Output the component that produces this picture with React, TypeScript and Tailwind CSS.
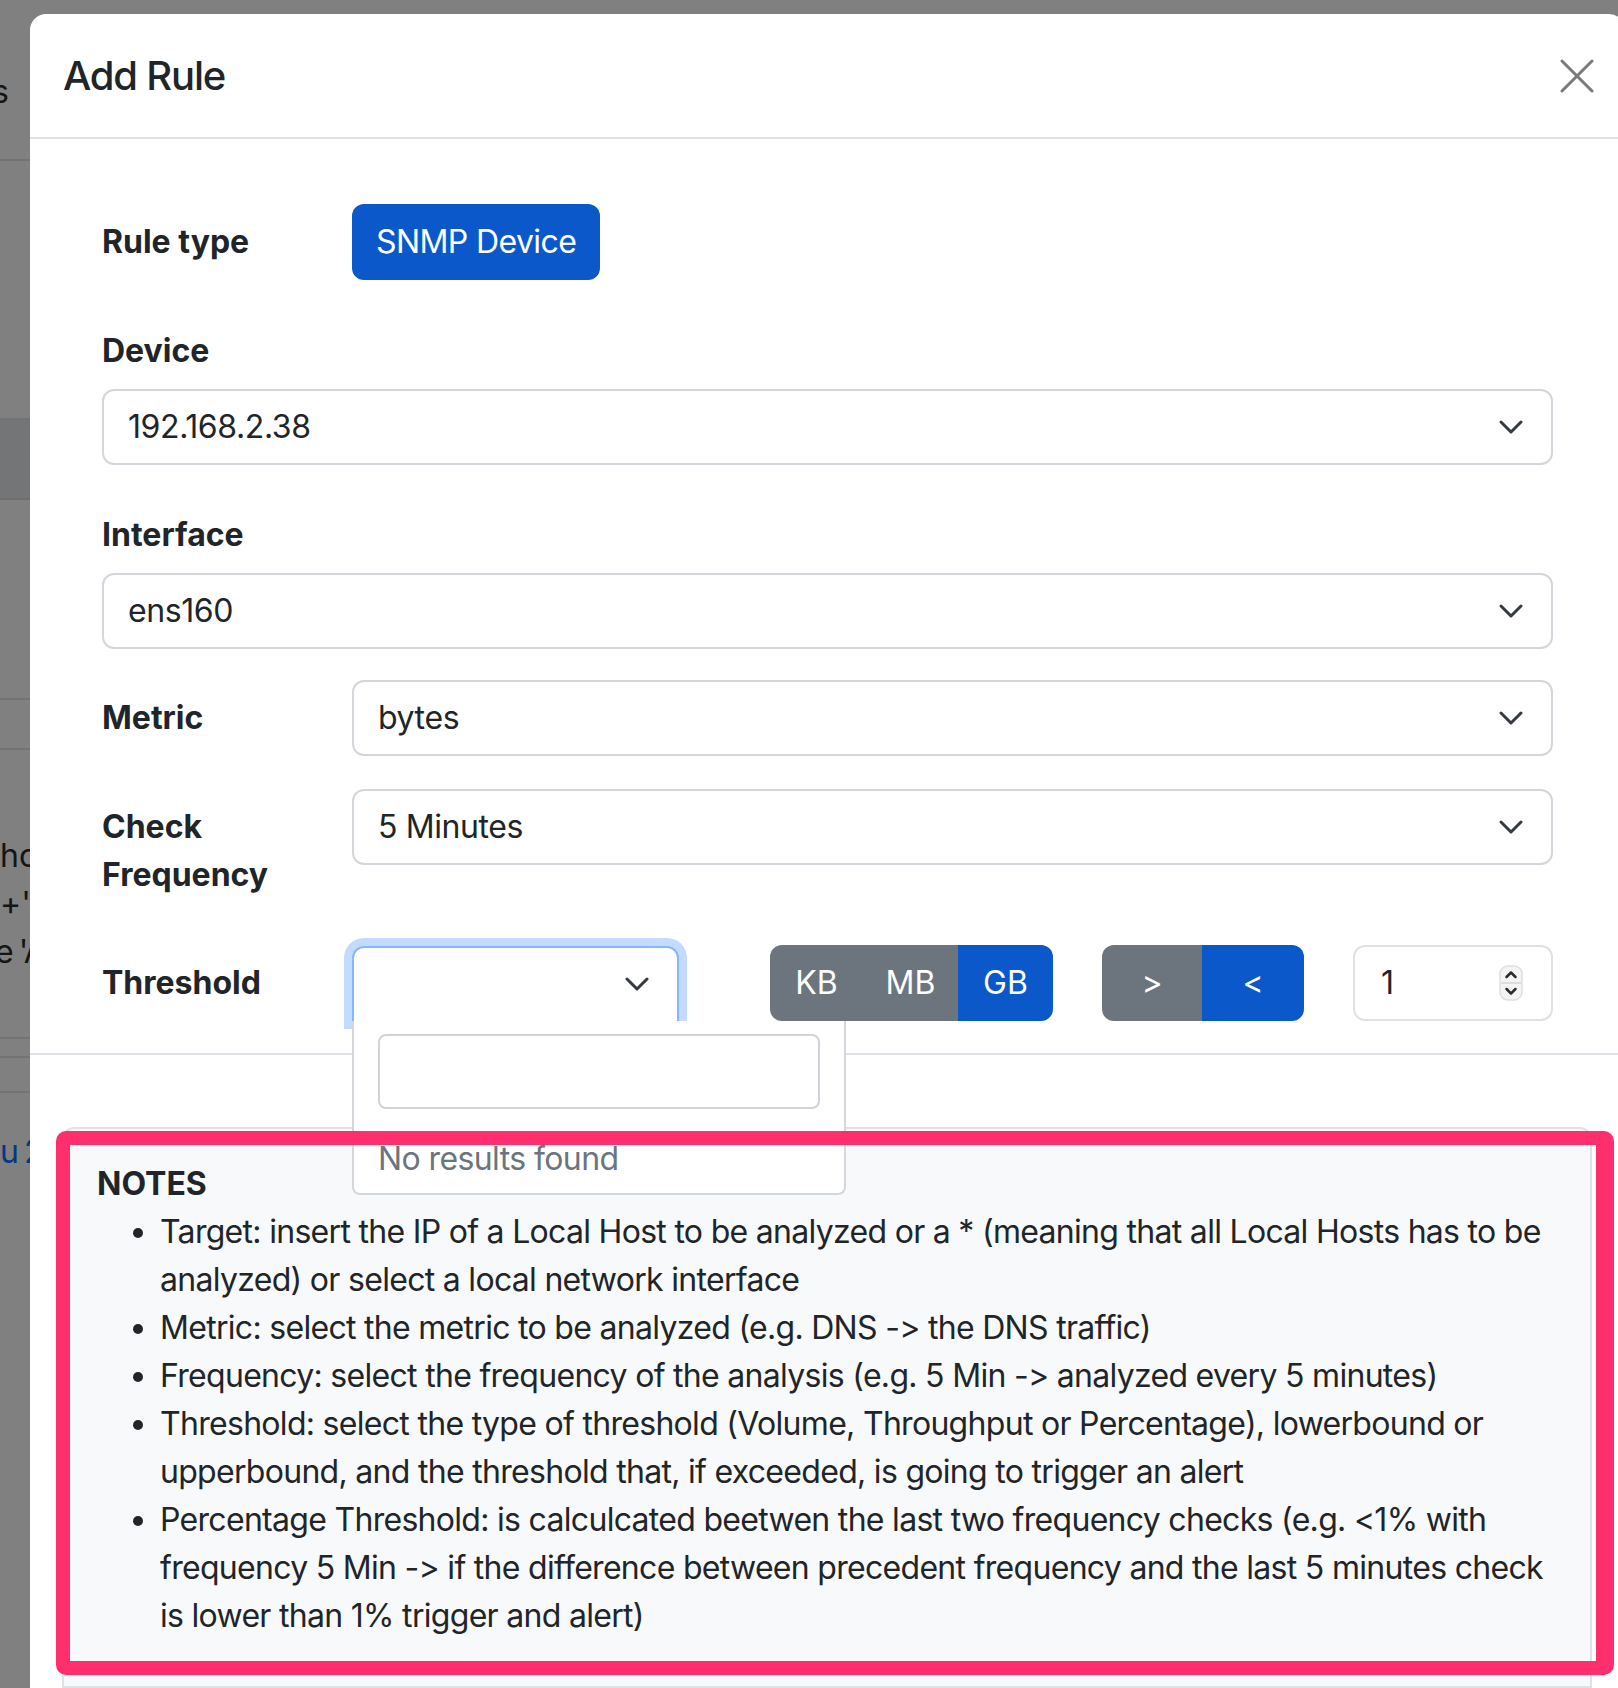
const FONT = "font-['Inter','Noto_Sans',sans-serif] [font-variant-ligatures:none]";

function Chevron() {
  return (
    <svg width="24" height="14" viewBox="0 0 24 14" fill="none" className="shrink-0">
      <path d="M2 2 L12 12 L22 2" stroke="#343a40" strokeWidth="3" strokeLinecap="round" strokeLinejoin="round" />
    </svg>
  );
}

function CloseIcon() {
  return (
    <svg width="34" height="34" viewBox="0 0 34 34" fill="none">
      <path d="M2 2 L32 32 M32 2 L2 32" stroke="#7a7a7a" strokeWidth="3" strokeLinecap="round" />
    </svg>
  );
}

function Select({ value }: { value: string }) {
  return (
    <div className="flex-1 h-[76px] flex items-center justify-between border-2 border-[#d3d7dc] rounded-[12px] pl-[24px] pr-[28px] text-[32px] leading-[48px] tracking-[-0.4px] text-[#212529]">
      <span>{value}</span>
      <Chevron />
    </div>
  );
}

function Label({ children }: { children: React.ReactNode }) {
  return <div className="text-[32px] leading-[48px] font-bold text-[#212529]">{children}</div>;
}

function Spinner() {
  return (
    <svg width="24" height="36" viewBox="0 0 24 36" fill="none">
      <rect x="1" y="1" width="22" height="34" rx="8" fill="#f4f4f4" stroke="#dedede" strokeWidth="1.5" />
      <line x1="2" y1="18" x2="22" y2="18" stroke="#d6d6d6" strokeWidth="1.5" />
      <path d="M7.5 12 L12 7.5 L16.5 12" stroke="#2b2b2b" strokeWidth="2.5" strokeLinecap="round" strokeLinejoin="round" />
      <path d="M7.5 24 L12 28.5 L16.5 24" stroke="#2b2b2b" strokeWidth="2.5" strokeLinecap="round" strokeLinejoin="round" />
    </svg>
  );
}

function PageStrip() {
  // the page behind the backdrop, only a sliver of it shows on the left
  return (
    <div className="w-[30px] shrink-0 overflow-hidden flex flex-col text-[32px] leading-[48px] text-[#141516] whitespace-nowrap">
      <div className="h-[161px] border-b-2 border-[#717375] pt-[68px]">
        <span className="block ml-[-8px]">s</span>
      </div>
      <div className="h-[259px] border-b-2 border-[#717375]" />
      <div className="h-[80px] bg-[#747576] border-b-2 border-[#6c6e70]" />
      <div className="h-[200px] border-b-2 border-[#717375]" />
      <div className="h-[50px] border-b-2 border-[#717375]" />
      <div className="h-[289px] border-b-2 border-[#717375] pt-[82px]">
        <div>hos</div>
        <div>+'</div>
        <div className="ml-[-5px] tracking-[-2px]">e 'A</div>
      </div>
      <div className="h-[19px] border-b-2 border-[#717375]" />
      <div className="h-[35px] border-b-2 border-[#717375]" />
      <div className="pt-[35px] text-[#07377f] tracking-[-2px]">u 2</div>
    </div>
  );
}

export default function App() {
  return (
    <div className={`${FONT} w-[1618px] h-[1688px] bg-[#808080] relative overflow-hidden flex`}>
      <PageStrip />

      {/* Modal */}
      <div className="mt-[14px] w-[1595px] shrink-0 bg-white rounded-t-[16px] flex flex-col">
        <div className="h-[125px] flex items-center justify-between pl-[33px] pr-[31px] border-b-2 border-[#dee2e6]">
          <h5 className="text-[40px] font-medium text-[#212529] tracking-[-1.2px]">Add Rule</h5>
          <CloseIcon />
        </div>

        <div className="px-[72px] pt-[65px] pb-[32px] border-b-2 border-[#dee2e6]">
          <div className="flex items-center h-[76px]">
            <div className="w-[250px]">
              <Label>Rule type</Label>
            </div>
            <button className="h-[76px] px-[24px] rounded-[12px] bg-[#0a58ca] text-white text-[32px] leading-[48px] tracking-[-0.6px]">
              SNMP Device
            </button>
          </div>

          <div className="mt-[47px]">
            <Label>Device</Label>
            <div className="mt-[14px] flex">
              <Select value="192.168.2.38" />
            </div>
          </div>

          <div className="mt-[46px]">
            <Label>Interface</Label>
            <div className="mt-[14px] flex">
              <Select value="ens160" />
            </div>
          </div>

          <div className="mt-[31px] flex items-center">
            <div className="w-[250px]">
              <Label>Metric</Label>
            </div>
            <Select value="bytes" />
          </div>

          <div className="mt-[33px] flex items-start">
            <div className="w-[250px] py-[14px]">
              <Label>
                <span className="block">Check</span>
                <span className="block">Frequency</span>
              </Label>
            </div>
            <Select value="5 Minutes" />
          </div>

          <div className="mt-[32px] flex items-center">
            <div className="w-[250px]">
              <Label>Threshold</Label>
            </div>

            <div className="relative w-[327px] h-[75px]">
              <div className="h-full flex items-center justify-end pr-[28px] border-2 border-b-0 border-[#86b7fe] rounded-t-[12px] shadow-[0_0_0_8px_#c3dbfe] bg-white">
                <Chevron />
              </div>
              {/* open dropdown */}
              <div className="absolute left-0 top-full z-10 w-[494px] h-[174px] bg-white border-2 border-t-0 border-[#d3d7dc] rounded-b-[8px] px-[24px] pt-[13px]">
                <div className="h-[75px] border-2 border-[#ced4da] rounded-[8px]" />
                <div className="mt-[26px] text-[32px] leading-[48px] tracking-[-0.6px] text-[#6c757d]">No results found</div>
              </div>
            </div>

            <div className="ml-[91px] flex h-[76px] rounded-[12px] overflow-hidden text-white text-[32px] leading-[48px]">
              <div className="w-[93px] bg-[#6c757d] flex items-center justify-center">KB</div>
              <div className="w-[95px] bg-[#6c757d] flex items-center justify-center">MB</div>
              <div className="w-[95px] bg-[#0a58ca] flex items-center justify-center">GB</div>
            </div>

            <div className="ml-[49px] flex h-[76px] rounded-[12px] overflow-hidden text-white text-[32px] leading-[48px]">
              <div className="w-[100px] bg-[#6c757d] flex items-center justify-center">&gt;</div>
              <div className="w-[102px] bg-[#0a58ca] flex items-center justify-center">&lt;</div>
            </div>

            <div className="ml-[49px] w-[200px] h-[76px] border-2 border-[#dee2e6] rounded-[12px] flex items-center justify-between pl-[26px] pr-[28px] text-[32px] leading-[48px] text-[#212529]">
              <span>1</span>
              <Spinner />
            </div>
          </div>
        </div>

        {/* Notes */}
        <div className="mt-[72px] ml-[32px] w-[1530px] flex-1 border-2 border-[#dee2e6] rounded-t-[12px] bg-[#f8f9fa] pt-[31px] px-[33px] text-[#212529] text-[32px] leading-[48px]">
          <div className="font-bold">NOTES</div>
          <ul className="list-disc pl-[63px] whitespace-nowrap tracking-[-0.7px]">
            <li>
              Target: insert the IP of a Local Host to be analyzed or a * (meaning that all Local Hosts has to be
              <br />
              analyzed) or select a local network interface
            </li>
            <li>Metric: select the metric to be analyzed (e.g. DNS -&gt; the DNS traffic)</li>
            <li>Frequency: select the frequency of the analysis (e.g. 5 Min -&gt; analyzed every 5 minutes)</li>
            <li>
              Threshold: select the type of threshold (Volume, Throughput or Percentage), lowerbound or
              <br />
              upperbound, and the threshold that, if exceeded, is going to trigger an alert
            </li>
            <li>
              Percentage Threshold: is calculcated beetwen the last two frequency checks (e.g. &lt;1% with
              <br />
              frequency 5 Min -&gt; if the difference between precedent frequency and the last 5 minutes check
              <br />
              is lower than 1% trigger and alert)
            </li>
          </ul>
        </div>
      </div>

      {/* highlight annotation over the notes */}
      <div className="absolute left-[56px] top-[1131px] w-[1558px] h-[544px] z-20 border-[14px] border-r-[18px] border-[#ff2f6e] rounded-[10px] pointer-events-none" />
    </div>
  );
}
